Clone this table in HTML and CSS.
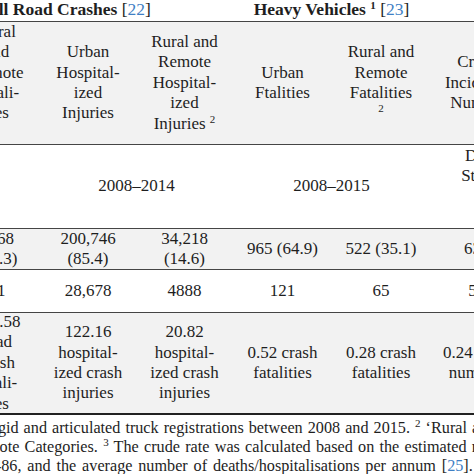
FILE: index.html
```html
<!DOCTYPE html>
<html>
<head>
<meta charset="utf-8">
<link rel="stylesheet" href="styles.css">
</head>
<body>
<div class="sheet">
  <div class="grid">
    <div class="c title span4"><span>All Road Crashes <span class="ref">[<a>22</a>]</span></span></div>
    <div class="c title span2"><span>Heavy Vehicles <sup>1</sup> <span class="ref">[<a>23</a>]</span></span></div>
    <div class="c title"></div>

    <div class="c shade head"></div>
    <div class="c shade head"><span>Rural<br>and<br>Remote<br>Fatali-<br>ties<br>&nbsp;</span></div>
    <div class="c shade head"><span>Urban<br>Hospital-<br>ized<br>Injuries</span></div>
    <div class="c shade head"><span>Rural and<br>Remote<br>Hospital-<br>ized<br>Injuries <sup>2</sup></span></div>
    <div class="c shade head"><span>Urban<br>Ftalities</span></div>
    <div class="c shade head"><span>Rural and<br>Remote<br>Fatalities<br><sup>2</sup></span></div>
    <div class="c shade head col5"><span>Crude<br>Incidence<br>Number</span></div>

    <div class="c period span2"></div>
    <div class="c period span2"><span>2008–2014</span></div>
    <div class="c period span2"><span>2008–2015</span></div>
    <div class="c period"><span>Data<br>Study<br>in<br>&nbsp;</span></div>

    <div class="c shade r1"></div>
    <div class="c shade r1"><span>3268<br>(18.3)</span></div>
    <div class="c shade r1"><span>200,746<br>(85.4)</span></div>
    <div class="c shade r1"><span>34,218<br>(14.6)</span></div>
    <div class="c shade r1"><span>965 (64.9)</span></div>
    <div class="c shade r1"><span>522 (35.1)</span></div>
    <div class="c shade r1"><span>6384</span></div>

    <div class="c r2"></div>
    <div class="c r2"><span>21</span></div>
    <div class="c r2"><span>28,678</span></div>
    <div class="c r2"><span>4888</span></div>
    <div class="c r2"><span>121</span></div>
    <div class="c r2"><span>65</span></div>
    <div class="c r2"><span>512</span></div>

    <div class="c shade r3 last"></div>
    <div class="c shade r3 last"><span>102.58<br>road<br>crash<br>fatali-<br>ties</span></div>
    <div class="c shade r3 last"><span>122.16<br>hospital-<br>ized crash<br>injuries</span></div>
    <div class="c shade r3 last"><span>20.82<br>hospital-<br>ized crash<br>injuries</span></div>
    <div class="c shade r3 last"><span>0.52 crash<br>fatalities</span></div>
    <div class="c shade r3 last"><span>0.28 crash<br>fatalities</span></div>
    <div class="c shade r3 last col5"><span>0.24 crash<br>numbers</span></div>
  </div>
  <div class="notes">
    <p class="l1">rigid and articulated truck registrations between 2008 and 2015. <sup>2</sup> ‘Rural and</p>
    <p class="l2">Remote Categories. <sup>3</sup> The crude rate was calculated based on the estimated resident</p>
    <p class="l3">2486, and the average number of deaths/hospitalisations per annum [<a>25</a>]. The</p>
  </div>
</div>
</body>
</html>
```

FILE: styles.css
```css
html, body {
  margin: 0;
  padding: 0;
  background: #ffffff;
}
body {
  width: 474px;
  height: 474px;
  overflow: hidden;
  font-family: "Liberation Serif", "Times New Roman", serif;
  color: #1e1e1e;
}
.sheet {
  margin-left: -96px;
  width: 628px;
}
.grid {
  display: grid;
  grid-template-columns: 50px 86px 96px 97px 99px 98px 102px;
  grid-template-rows: 22px 123px 84px 41px 43px 102px;
}
.c {
  box-sizing: border-box;
  display: flex;
  align-items: center;
  justify-content: center;
  text-align: center;
  font-size: 17px;
  line-height: 20.4px;
  white-space: nowrap;
  border-bottom: 1px solid #454545;
}
.span2 { grid-column: span 2; }
.span4 { grid-column: span 4; }
.shade { background: #f2f2f2; }
.last { border-bottom: 2px solid #222; }
.col5 { padding-right: 6px; }
.title {
  font-weight: bold;
  font-size: 17.5px;
  padding-bottom: 2px;
}
.ref { font-weight: normal; }
a { color: #3f7fc4; }
sup {
  font-size: 11px;
  line-height: 0;
  vertical-align: 6px;
}
.notes {
  padding-top: 4px;
  padding-left: 84px;
}
.notes p {
  margin: 0;
  font-size: 16.2px;
  line-height: 19px;
  white-space: nowrap;
}
.notes .l1 { word-spacing: 1px; }
.notes .l2 { margin-left: -19px; word-spacing: 1.2px; }
.notes .l3 { margin-left: -3px; word-spacing: 1.8px; }
```
